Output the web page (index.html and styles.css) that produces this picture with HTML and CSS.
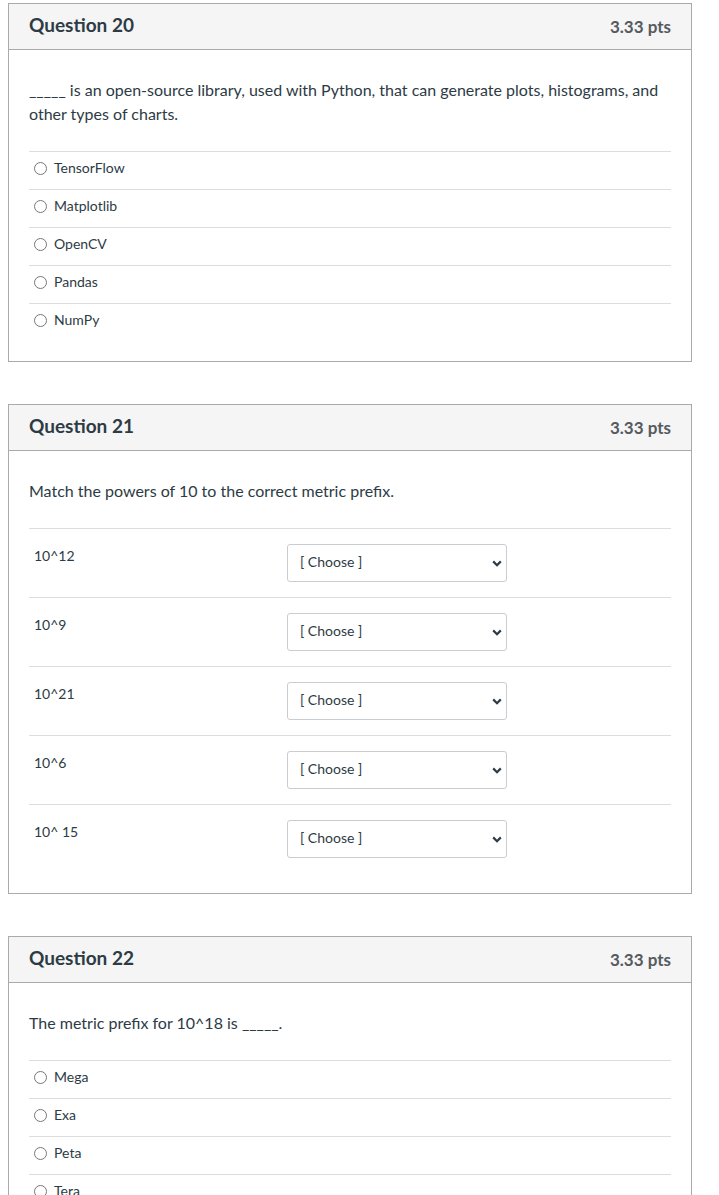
FILE: index.html
```html
<!DOCTYPE html>
<html>
<head>
<meta charset="utf-8">
<link rel="stylesheet" href="styles.css">
</head>
<body>
<div class="question">
  <div class="q-header"><span class="q-name">Question 20</span><span class="q-pts">3.33 pts</span></div>
  <div class="q-body">
    <div class="q-text">_____ is an open-source library, used with Python, that can generate plots, histograms, and other types of charts.</div>
    <div class="answers">
      <div class="answer"><span class="radio"></span><span>TensorFlow</span></div>
      <div class="answer"><span class="radio"></span><span>Matplotlib</span></div>
      <div class="answer"><span class="radio"></span><span>OpenCV</span></div>
      <div class="answer"><span class="radio"></span><span>Pandas</span></div>
      <div class="answer"><span class="radio"></span><span>NumPy</span></div>
    </div>
  </div>
</div>

<div class="question">
  <div class="q-header"><span class="q-name">Question 21</span><span class="q-pts">3.33 pts</span></div>
  <div class="q-body">
    <div class="q-text">Match the powers of 10 to the correct metric prefix.</div>
    <div class="answers">
      <div class="match"><span class="match-label">10^12</span><div class="select"><span>[ Choose ]</span><svg class="chev" width="10" height="7" viewBox="0 0 10 7"><path d="M1.2 1.4 L5 5.2 L8.8 1.4" fill="none" stroke="#2d3b45" stroke-width="2.2"/></svg></div></div>
      <div class="match"><span class="match-label">10^9</span><div class="select"><span>[ Choose ]</span><svg class="chev" width="10" height="7" viewBox="0 0 10 7"><path d="M1.2 1.4 L5 5.2 L8.8 1.4" fill="none" stroke="#2d3b45" stroke-width="2.2"/></svg></div></div>
      <div class="match"><span class="match-label">10^21</span><div class="select"><span>[ Choose ]</span><svg class="chev" width="10" height="7" viewBox="0 0 10 7"><path d="M1.2 1.4 L5 5.2 L8.8 1.4" fill="none" stroke="#2d3b45" stroke-width="2.2"/></svg></div></div>
      <div class="match"><span class="match-label">10^6</span><div class="select"><span>[ Choose ]</span><svg class="chev" width="10" height="7" viewBox="0 0 10 7"><path d="M1.2 1.4 L5 5.2 L8.8 1.4" fill="none" stroke="#2d3b45" stroke-width="2.2"/></svg></div></div>
      <div class="match"><span class="match-label">10^ 15</span><div class="select"><span>[ Choose ]</span><svg class="chev" width="10" height="7" viewBox="0 0 10 7"><path d="M1.2 1.4 L5 5.2 L8.8 1.4" fill="none" stroke="#2d3b45" stroke-width="2.2"/></svg></div></div>
    </div>
  </div>
</div>

<div class="question">
  <div class="q-header"><span class="q-name">Question 22</span><span class="q-pts">3.33 pts</span></div>
  <div class="q-body">
    <div class="q-text">The metric prefix for 10^18 is _____.</div>
    <div class="answers">
      <div class="answer"><span class="radio"></span><span>Mega</span></div>
      <div class="answer"><span class="radio"></span><span>Exa</span></div>
      <div class="answer"><span class="radio"></span><span>Peta</span></div>
      <div class="answer"><span class="radio"></span><span>Tera</span></div>
    </div>
  </div>
</div>
</body>
</html>
```

FILE: styles.css
```css
html, body {
  margin: 0;
  padding: 0;
}
body {
  padding: 3px 0 0 8px;
  font-family: Lato, "Open Sans", sans-serif;
  color: #2d3b45;
  background: #fff;
}
.question {
  width: 684px;
  box-sizing: border-box;
  border: 1px solid #aaaaaa;
  margin-bottom: 42px;
}
.q-header {
  height: 46px;
  box-sizing: border-box;
  background: #f5f5f5;
  border-bottom: 1px solid #aaaaaa;
  padding: 0 20px 4px 20px;
  display: flex;
  align-items: center;
  justify-content: space-between;
}
.q-name {
  font-size: 19px;
  font-weight: 700;
  color: #2d3b45;
}
.q-pts {
  font-size: 17px;
  font-weight: 700;
  color: #555a60;
  margin-top: 4px;
}
.q-body {
  padding: 28px 20px 20px 20px;
}
.q-text {
  font-size: 16px;
  line-height: 24px;
  margin-bottom: 25px;
}
.answer {
  border-top: 1px solid #dddddd;
  height: 38px;
  box-sizing: border-box;
  padding: 6px 0 0 5px;
  display: flex;
  align-items: flex-start;
  font-size: 14px;
  line-height: 20px;
}
.radio {
  width: 13px;
  height: 13px;
  box-sizing: border-box;
  border: 1px solid #777;
  border-radius: 50%;
  margin: 4px 7px 0 0;
  flex: none;
}
.match {
  border-top: 1px solid #dddddd;
  padding: 15px 0;
  display: grid;
  grid-template-columns: 258px 220px;
  align-items: start;
}
.match-label {
  font-size: 14px;
  line-height: 20px;
  padding: 2px 0 0 5px;
}
.select {
  height: 38px;
  box-sizing: border-box;
  border: 1px solid #c7cdd1;
  border-radius: 3px;
  display: flex;
  align-items: center;
  justify-content: space-between;
  padding: 0 4px 3px 12px;
  font-size: 14px;
}
.chev {
  display: block;
  margin-top: 3px;
}
```
